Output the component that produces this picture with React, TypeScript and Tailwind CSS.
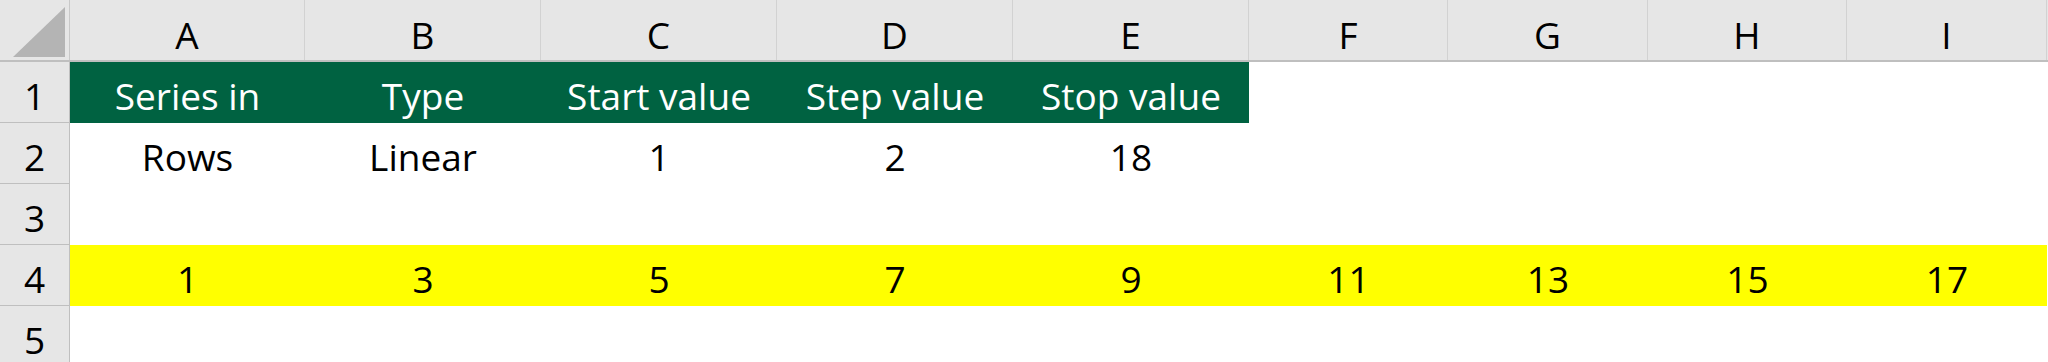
import React from 'react';

const columns = [
  { name: 'A', w: 'w-[235px]' },
  { name: 'B', w: 'w-[236px]' },
  { name: 'C', w: 'w-[236px]' },
  { name: 'D', w: 'w-[236px]' },
  { name: 'E', w: 'w-[236px]' },
  { name: 'F', w: 'w-[199px]' },
  { name: 'G', w: 'w-[200px]' },
  { name: 'H', w: 'w-[199px]' },
  { name: 'I', w: 'w-[200px]' },
];

type Cell = { text?: string; fill?: 'green' | 'yellow' };

const rows: Cell[][] = [
  [
    { text: 'Series in', fill: 'green' },
    { text: 'Type', fill: 'green' },
    { text: 'Start value', fill: 'green' },
    { text: 'Step value', fill: 'green' },
    { text: 'Stop value', fill: 'green' },
    {}, {}, {}, {},
  ],
  [{ text: 'Rows' }, { text: 'Linear' }, { text: '1' }, { text: '2' }, { text: '18' }, {}, {}, {}, {}],
  [{}, {}, {}, {}, {}, {}, {}, {}, {}],
  ['1', '3', '5', '7', '9', '11', '13', '15', '17'].map((n) => ({ text: n, fill: 'yellow' as const })),
  [{}, {}, {}, {}, {}, {}, {}, {}, {}],
];

const fillClass = (fill?: Cell['fill']) => {
  if (fill === 'green') return 'bg-[#006241] text-white';
  if (fill === 'yellow') return 'bg-[#ffff00] text-black';
  return 'bg-white text-black';
};

export default function App() {
  return (
    <div
      className="w-[2048px] h-[362px] overflow-hidden bg-white text-[37px] leading-none"
      style={{ fontFamily: '"Open Sans", Lato, sans-serif' }}
    >
      {/* column letters */}
      <div className="flex h-[62px] bg-[#e6e6e6] border-b-2 border-[#bfbfbf]">
        <div className="w-[70px] shrink-0 border-r border-[#c8c8c8] flex items-end justify-end pr-[4px] pb-[3px]">
          <svg width="52" height="50" viewBox="0 0 52 50">
            <polygon points="52,0 52,50 0,50" fill="#b4b4b4" />
          </svg>
        </div>
        {columns.map((c) => (
          <div
            key={c.name}
            className={`${c.w} shrink-0 border-r border-[#d2d2d2] flex items-center justify-center pt-[8px]`}
          >
            {c.name}
          </div>
        ))}
      </div>

      {rows.map((row, r) => {
        // the last row is only partly in view
        const last = r === rows.length - 1;
        const rowH = last ? 'h-[57px]' : 'h-[61px]';
        const padT = last ? 'pt-[10px]' : 'pt-[6px]';
        return (
          <div key={r} className={`flex ${rowH}`}>
            <div
              className={`w-[70px] shrink-0 bg-[#e6e6e6] border-r border-b border-[#bfbfbf] flex items-center justify-center ${padT}`}
            >
              {r + 1}
            </div>
            {row.map((cell, i) => (
              <div
                key={i}
                className={`${columns[i].w} shrink-0 flex items-center justify-center ${padT} ${fillClass(cell.fill)}`}
              >
                {cell.text}
              </div>
            ))}
          </div>
        );
      })}
    </div>
  );
}
